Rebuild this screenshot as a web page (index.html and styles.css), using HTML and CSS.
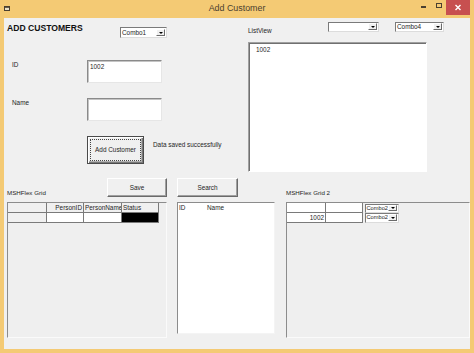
FILE: index.html
```html
<!DOCTYPE html>
<html>
<head>
<meta charset="utf-8">
<title>Add Customer</title>
<link rel="stylesheet" href="styles.css">
</head>
<body>
<div class="window">
  <div class="titlebar">
    <svg class="appicon" width="6" height="5" viewBox="0 0 6 5"><rect x="0.5" y="0.5" width="5" height="4" fill="#e8e0c8" stroke="#4a4030"/><rect x="0.5" y="0.5" width="5" height="1.3" fill="#4a4030"/></svg>
    <div class="title">Add Customer</div>
    <div class="capbtns">
      <span class="cb min"><span class="mindash"></span></span>
      <span class="cb max"><span class="maxbox"></span></span>
      <span class="cb close"><svg width="24" height="15" viewBox="0 0 24 15"><path d="M9.5 5 L14.5 10 M14.5 5 L9.5 10" stroke="#fff" stroke-width="1.4" fill="none"/></svg></span>
    </div>
  </div>
  <div class="client">
    <div class="top">
      <div class="left">
        <div class="row r-head">
          <div class="heading">ADD CUSTOMERS</div>
          <div class="combo c1"><span class="ctext">Combo1</span><span class="drop"><span class="tri"></span></span></div>
        </div>
        <div class="row r-id">
          <div class="lbl">ID</div>
          <div class="textbox">1002</div>
        </div>
        <div class="row r-name">
          <div class="lbl">Name</div>
          <div class="textbox"></div>
        </div>
        <div class="row r-btn">
          <div class="btn default"><span class="focus">Add Customer</span></div>
          <div class="msg">Data saved successfully</div>
        </div>
      </div>
      <div class="right">
        <div class="row r-lv">
          <div class="lvlabel">ListView</div>
          <div class="combo c3"><span class="ctext"></span><span class="drop"><span class="tri"></span></span></div>
          <div class="combo c4"><span class="ctext">Combo4</span><span class="drop"><span class="tri"></span></span></div>
        </div>
        <div class="listview"><div class="lvitem">1002</div></div>
      </div>
    </div>
    <div class="mid">
      <div class="gridlabel">MSHFlex Grid</div>
      <div class="btn save">Save</div>
      <div class="btn search">Search</div>
      <div class="gridlabel g2label">MSHFlex Grid 2</div>
    </div>
    <div class="bottom">
      <div class="flexgrid g1">
        <div class="grow">
          <div class="gc w0 fixed"></div>
          <div class="gc w1 fixed ra">PersonID</div>
          <div class="gc w2 fixed">PersonName</div>
          <div class="gc w3 fixed">Status</div>
        </div>
        <div class="grow r2">
          <div class="gc w0 fixed"></div>
          <div class="gc w1 white"></div>
          <div class="gc w2 white"></div>
          <div class="gc w3 sel"></div>
        </div>
      </div>
      <div class="listbox">
        <div class="lbhead"><span class="lbid">ID</span><span>Name</span></div>
      </div>
      <div class="flexgrid g2">
        <div class="grow">
          <div class="gc w0 white"></div>
          <div class="gc w1 white"></div>
          <div class="combo c2"><span class="ctext">Combo2</span><span class="drop"><span class="tri"></span></span></div>
        </div>
        <div class="grow r2">
          <div class="gc w0 white ra">1002</div>
          <div class="gc w1 white"></div>
          <div class="combo c2"><span class="ctext">Combo2</span><span class="drop"><span class="tri"></span></span></div>
        </div>
      </div>
    </div>
  </div>
</div>
</body>
</html>
```

FILE: styles.css
```css
html, body {
  margin: 0;
  padding: 0;
}
body {
  width: 474px;
  height: 353px;
  overflow: hidden;
  background: #f4ca74;
  font-family: "Liberation Sans", Arial, sans-serif;
  color: #1e1e1e;
}
.window {
  width: 474px;
  height: 353px;
  display: flex;
  flex-direction: column;
  background: #f4ca74;
}

/* title bar */
.titlebar {
  height: 18px;
  flex: none;
  display: grid;
  grid-template-columns: 1fr auto 1fr;
  align-items: start;
}
.appicon {
  margin: 6px 0 0 4px;
  justify-self: start;
}
.title {
  font-family: "Liberation Sans", Arial, sans-serif;
  font-size: 8.9px;
  line-height: 16px;
  color: #4a4030;
}
.capbtns {
  justify-self: end;
  display: flex;
  margin-right: 4px;
}
.cb {
  height: 15px;
  display: flex;
  justify-content: center;
}
.cb.min { width: 15px; }
.cb.max { width: 15px; }
.cb.close { width: 24px; background: #c75050; }
.mindash {
  width: 5px;
  height: 1.5px;
  margin-top: 6px;
  background: #4a4030;
}
.maxbox {
  box-sizing: border-box;
  width: 6px;
  height: 5px;
  margin-top: 3px;
  border: 1px solid #4a4030;
  border-top-width: 1.5px;
}

/* client area */
.client {
  flex: 1;
  margin: 0 4px 4px 4px;
  background: #f0f0f0;
  overflow: hidden;
}
.top {
  display: flex;
  height: 154px;
}
.left {
  margin-left: 3px;
  width: 241px;
  flex: none;
}
.row {
  display: flex;
  align-items: flex-start;
}
.r-head {
  margin-top: 5px;
  height: 15px;
}
.heading {
  width: 113px;
  font-weight: bold;
  font-size: 8.6px;
  line-height: 10px;
  color: #111;
}
.r-id { margin-top: 22px; }
.r-name { margin-top: 15px; }
.r-btn { margin-top: 15px; }
.lbl {
  margin-left: 5px;
  width: 75px;
  font-size: 6.4px;
  line-height: 8px;
  padding-top: 1px;
}
.textbox {
  box-sizing: border-box;
  width: 75px;
  height: 23px;
  background: #fff;
  border-top: 1px solid #8a8a8a;
  border-left: 1px solid #8a8a8a;
  border-right: 1px solid #e6e6e6;
  border-bottom: 1px solid #e6e6e6;
  box-shadow: inset 1px 1px 0 #c4c4c4;
  font-size: 6.4px;
  line-height: 8px;
  padding: 2px 0 0 2px;
}
.msg {
  margin-left: 9px;
  margin-top: 5px;
  font-size: 6.4px;
  line-height: 8px;
}

/* combo boxes */
.combo {
  box-sizing: border-box;
  display: flex;
  background: #fff;
  border-top: 1px solid #7a7a7a;
  border-left: 1px solid #7a7a7a;
  border-right: 1px solid #dcdcdc;
  border-bottom: 1px solid #dcdcdc;
}
.ctext {
  flex: 1;
  min-width: 0;
  font-size: 6.4px;
  line-height: 8px;
  padding-left: 1px;
  white-space: nowrap;
  overflow: hidden;
}
.drop {
  box-sizing: border-box;
  flex: none;
  width: 9px;
  margin: 0 1px 1px 0;
  background: #f0f0f0;
  border-top: 1px solid #fff;
  border-left: 1px solid #fff;
  border-right: 1px solid #6a6a6a;
  border-bottom: 1px solid #6a6a6a;
  display: flex;
  align-items: center;
  justify-content: center;
}
.tri {
  width: 0;
  height: 0;
  border-left: 2px solid transparent;
  border-right: 2px solid transparent;
  border-top: 2px solid #000;
}
.combo.c1 {
  margin-top: 4px;
  width: 47px;
  height: 11px;
}
.combo.c1 .ctext { line-height: 9px; }
.combo.c1 .drop { margin-top: 1px; }

/* right column */
.right {
  width: 196px;
  flex: none;
}
.r-lv {
  margin-top: 4px;
  height: 10px;
}
.lvlabel {
  width: 80px;
  margin-top: 5px;
  font-size: 6.4px;
  line-height: 8px;
}
.combo.c3 { width: 51px; height: 10px; }
.combo.c4 { margin-left: 16px; width: 49px; height: 10px; }
.listview {
  box-sizing: border-box;
  margin-top: 10px;
  width: 179px;
  height: 130px;
  background: #fff;
  border-top: 1px solid #a0a0a0;
  border-left: 1px solid #a0a0a0;
  border-right: 1px solid #fff;
  border-bottom: 1px solid #fff;
  box-shadow: inset 1px 1px 0 #707070;
  padding: 3px 0 0 7px;
  font-size: 6.4px;
  line-height: 8px;
}

/* buttons */
.btn {
  box-sizing: border-box;
  display: flex;
  align-items: center;
  justify-content: center;
  background: #f0f0f0;
  font-size: 6.4px;
  line-height: 8px;
  border-top: 1px solid #fff;
  border-left: 1px solid #fff;
  border-right: 1px solid #6a6a6a;
  border-bottom: 1px solid #6a6a6a;
  box-shadow: inset -1px -1px 0 #a0a0a0;
}
.btn.default {
  margin-left: 80px;
  width: 57px;
  height: 28px;
  border: 1px solid #4a4a4a;
  box-shadow: inset 1px 1px 0 #fff, inset -1px -1px 0 #7a7a7a, inset -2px -2px 0 #b0b0b0;
  padding: 2px;
}
.focus {
  box-sizing: border-box;
  flex: 1;
  align-self: stretch;
  display: flex;
  align-items: center;
  justify-content: center;
  border: 1px dotted #444;
}

/* middle row */
.mid {
  display: flex;
  align-items: flex-start;
  height: 30px;
}
.gridlabel {
  margin-left: 3px;
  width: 100px;
  margin-top: 17px;
  font-size: 6.2px;
  line-height: 8px;
  white-space: nowrap;
}
.gridlabel.g2label {
  margin-left: 48px;
  width: auto;
}
.btn.save {
  margin-top: 6px;
  width: 60px;
  height: 19px;
}
.btn.search {
  margin-top: 6px;
  margin-left: 10px;
  width: 61px;
  height: 19px;
}

/* bottom grids */
.bottom {
  display: flex;
  margin-left: 3px;
  height: 136px;
}
.flexgrid {
  box-sizing: border-box;
  flex: none;
  height: 136px;
  background: #efefef;
  border-top: 1px solid #8c8c8c;
  border-left: 1px solid #8c8c8c;
  border-bottom: 1px solid #fafafa;
  border-right: 1px solid #fafafa;
}
.flexgrid.g1 { width: 160px; }
.flexgrid.g2 { width: 184px; margin-left: 11px; }
.grow {
  display: flex;
  align-items: flex-start;
  height: 10px;
}
.gc {
  box-sizing: border-box;
  height: 10px;
  border-right: 1px solid #7a7a7a;
  border-bottom: 1px solid #7a7a7a;
  font-size: 6.4px;
  line-height: 9px;
  white-space: nowrap;
  overflow: hidden;
  padding: 0 1px;
}
.w0 { width: 39px; }
.w1 { width: 37px; }
.w2 { width: 38px; }
.w3 { width: 37px; }
.fixed { background: #f0f0f0; }
.white { background: #fff; }
.sel { background: #000; }
.ra { text-align: right; }
.combo.c2 {
  margin-left: 2px;
  margin-top: 1px;
  width: 34px;
  height: 9px;
}
.combo.c2 .ctext {
  font-size: 5.7px;
  line-height: 7px;
  padding-left: 0.5px;
}
.grow.r2 .combo.c2 { margin-top: 0; height: 10px; }

.listbox {
  box-sizing: border-box;
  flex: none;
  margin-left: 10px;
  width: 98px;
  height: 132px;
  background: #fff;
  border-top: 1px solid #8c8c8c;
  border-left: 1px solid #8c8c8c;
  border-right: 1px solid #f4f4f4;
  border-bottom: 1px solid #f4f4f4;
  font-size: 6.4px;
  line-height: 8px;
}
.lbhead {
  display: flex;
  padding: 1px 0 0 1px;
}
.lbid { width: 28px; }
```
